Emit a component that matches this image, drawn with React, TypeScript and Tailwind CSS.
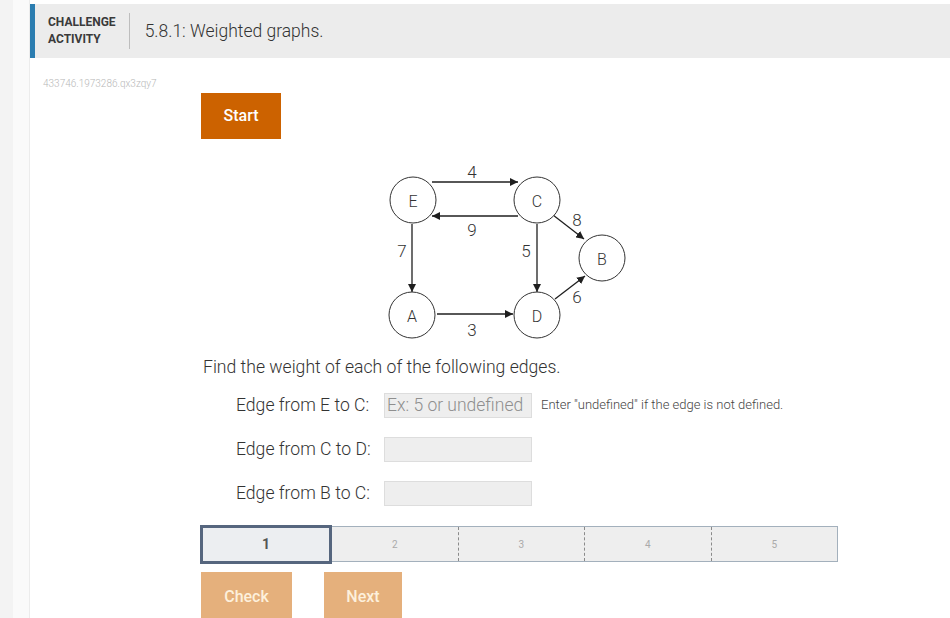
import React from "react";

const font = { fontFamily: "Roboto, 'Liberation Sans', Arial, sans-serif" };

function Graph() {
  const nodes = [
    { id: "E", x: 43, y: 50 },
    { id: "C", x: 167, y: 50 },
    { id: "B", x: 232, y: 108 },
    { id: "A", x: 42, y: 165 },
    { id: "D", x: 167, y: 165 },
  ];
  const edges = [
    [62, 32, 148, 32],
    [148, 66, 62, 66],
    [42, 74, 42, 142],
    [167, 74, 167, 142],
    [67, 164, 143, 164],
    [183, 65, 214, 89],
    [185, 149, 215, 126],
  ];
  const labels = [
    ["4", 102, 22],
    ["9", 102, 80],
    ["7", 32, 101],
    ["5", 156, 101],
    ["3", 102, 180],
    ["8", 207, 70],
    ["6", 207, 147],
  ];
  return (
    <svg width="270" height="200" viewBox="0 0 270 200" className="block">
      <defs>
        <marker id="arr" viewBox="0 0 10 10" refX="10" refY="5" markerWidth="8" markerHeight="8" markerUnits="userSpaceOnUse" orient="auto">
          <path d="M0,0 L10,5 L0,10 z" fill="#1f1f1f" />
        </marker>
      </defs>
      {edges.map((e, i) => (
        <line key={i} x1={e[0]} y1={e[1]} x2={e[2]} y2={e[3]} stroke="#1f1f1f" strokeWidth="1.3" markerEnd="url(#arr)" />
      ))}
      {nodes.map((n) => (
        <g key={n.id}>
          <circle cx={n.x} cy={n.y} r="23" fill="#fff" stroke="#333" strokeWidth="1" />
          <text x={n.x} y={n.y + 1} textAnchor="middle" dominantBaseline="central" fontSize="16" fontWeight="300" fill="#333" style={font}>
            {n.id}
          </text>
        </g>
      ))}
      {labels.map((l) => (
        <text key={l[0] as string} x={l[1] as number} y={l[2] as number} textAnchor="middle" dominantBaseline="central" fontSize="17" fontWeight="300" fill="#333" style={font}>
          {l[0]}
        </text>
      ))}
    </svg>
  );
}

function Row({ label, placeholder, hint }: { label: string; placeholder?: string; hint?: string }) {
  return (
    <div className="flex items-center h-[24px] ml-[206px] shrink-0">
      <div className="w-[148px] text-[17.6px] font-light text-[#333] leading-[24px] whitespace-nowrap">{label}</div>
      <div className="w-[148px] h-[25px] bg-[#eeeeee] border border-[#dddddd] flex items-center pl-[2px] text-[17.5px] font-light text-[#8f8f8f] whitespace-nowrap overflow-hidden">
        {placeholder}
      </div>
      {hint && <div className="ml-[9px] text-[13px] font-light text-[#444] whitespace-nowrap">{hint}</div>}
    </div>
  );
}

export default function App() {
  return (
    <div className="w-[950px] h-[618px] overflow-hidden bg-white flex" style={font}>
      <div className="w-[13px] h-full bg-[#f3f3f3] shrink-0" />
      <div className="w-[17px] h-full bg-[#fafafa] border-r border-[#ececec] shrink-0" />
      <div className="flex-1 flex flex-col">
        <div className="shrink-0 mt-[4px] h-[54px] bg-[#ececec] border-l-[5px] border-[#2b7db0] flex items-center">
          <div className="ml-[13px] text-[12px] font-bold leading-[17px] text-[#3a3a3a]">
            <div>CHALLENGE</div>
            <div>ACTIVITY</div>
          </div>
          <div className="ml-[13px] w-[1px] h-[36px] bg-[#bdbdbd]" />
          <div className="ml-[15px] text-[17.5px] font-light text-[#333]">5.8.1: Weighted graphs.</div>
        </div>
        <div className="shrink-0 mt-[20px] ml-[13px] text-[10px] leading-[12px] font-light text-[#b8b8b8]">433746.1973286.qx3zqy7</div>
        <div className="shrink-0 mt-[3px] ml-[171px] w-[80px] h-[46px] bg-[#cc6200] text-white text-[16px] font-medium flex items-center justify-center">
          Start
        </div>
        <div className="shrink-0 mt-[11px] ml-[340px]">
          <Graph />
        </div>
        <div className="shrink-0 mt-[5px] ml-[173px] text-[17.6px] font-light leading-[24px] text-[#333]">
          Find the weight of each of the following edges.
        </div>
        <div className="shrink-0 mt-[14px] flex flex-col gap-[20px]">
          <Row label="Edge from E to C:" placeholder="Ex: 5 or undefined" hint={'Enter "undefined" if the edge is not defined.'} />
          <Row label="Edge from C to D:" />
          <Row label="Edge from B to C:" />
        </div>
        <div className="shrink-0 mt-[19px] ml-[170px] w-[638px] h-[40px] flex items-center">
          <div className="w-[132px] h-[39px] border-[3px] border-[#56667e] bg-[#eceef1] flex items-center justify-center text-[14px] font-bold text-[#555]">
            1
          </div>
          <div className="flex-1 h-[36px] flex border border-l-0 border-[#a3b0bc] bg-[#eeeeee]">
            {["2", "3", "4", "5"].map((n, i) => (
              <div
                key={n}
                className={`flex-1 flex items-center justify-center text-[10px] text-[#aaa] ${i > 0 ? "border-l border-dashed border-[#8a8a8a]" : ""}`}
              >
                {n}
              </div>
            ))}
          </div>
        </div>
        <div className="shrink-0 mt-[8px] ml-[171px] flex gap-[32px]">
          <div className="w-[91px] h-[50px] bg-[#e5b07c] text-[#fdf0dc] text-[16px] font-medium flex items-center justify-center">
            Check
          </div>
          <div className="w-[78px] h-[50px] bg-[#e5b07c] text-[#fdf0dc] text-[16px] font-medium flex items-center justify-center">
            Next
          </div>
        </div>
      </div>
    </div>
  );
}
